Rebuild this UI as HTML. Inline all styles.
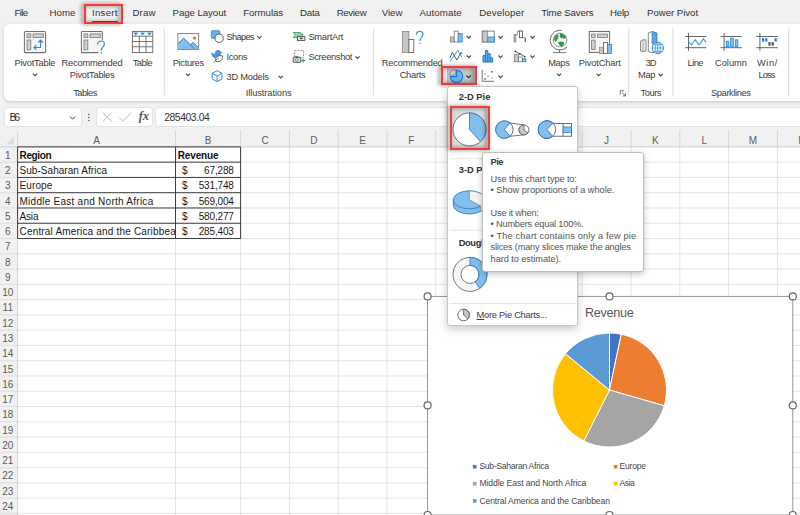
<!DOCTYPE html><html><head><meta charset="utf-8"><title>Excel - Insert Pie Chart</title><style>
html,body{margin:0;padding:0}
body{width:800px;height:515px;overflow:hidden;background:#f1f1f1;font-family:'Liberation Sans',sans-serif;color:#444}
#app{position:relative;width:800px;height:515px;overflow:hidden;background:#f1f1f1}
.t{position:absolute;white-space:nowrap;line-height:1;color:#3c3c3c}
.abs{position:absolute}
svg{position:absolute;left:0;top:0;overflow:visible}
.ribbon{position:absolute;left:4px;top:24px;width:820px;height:76.5px;background:#fff;border-radius:6px;box-shadow:0 1px 3px rgba(0,0,0,.18)}
.box{position:absolute;background:#fff;border-radius:3px;box-shadow:0 0 0 .7px #dedede}
.menu{position:absolute;left:447px;top:86px;width:131px;height:240px;background:#fff;border:.8px solid #c6c6c6;border-radius:3px;box-shadow:0 3px 8px rgba(0,0,0,.22);box-sizing:border-box}
.tip{position:absolute;left:482px;top:152px;width:162px;height:120px;background:#fff;border:.8px solid #bebebe;border-radius:3px;box-shadow:0 2px 6px rgba(0,0,0,.25);box-sizing:border-box}
.red{position:absolute;border:2px solid #f43a3a;box-sizing:border-box;filter:drop-shadow(-1.5px 0px 2px rgba(0,0,0,.6))}
</style></head><body><div id="app">
<div class="tabs">
<span class="t" style="left:14.50px;top:8px;font-size:9.7px;letter-spacing:-0.643px;color:#333;">File</span>
<span class="t" style="left:49.50px;top:8px;font-size:9.7px;letter-spacing:0.042px;color:#333;">Home</span>
<span class="t" style="left:92.00px;top:8px;font-size:9.7px;letter-spacing:0.248px;color:#333;">Insert</span>
<span class="t" style="left:132.50px;top:8px;font-size:9.7px;letter-spacing:0.122px;color:#333;">Draw</span>
<span class="t" style="left:172.50px;top:8px;font-size:9.7px;letter-spacing:-0.077px;color:#333;">Page Layout</span>
<span class="t" style="left:243.20px;top:8px;font-size:9.7px;letter-spacing:-0.060px;color:#333;">Formulas</span>
<span class="t" style="left:300.00px;top:8px;font-size:9.7px;letter-spacing:-0.163px;color:#333;">Data</span>
<span class="t" style="left:336.70px;top:8px;font-size:9.7px;letter-spacing:-0.361px;color:#333;">Review</span>
<span class="t" style="left:381.70px;top:8px;font-size:9.7px;letter-spacing:-0.016px;color:#333;">View</span>
<span class="t" style="left:419.50px;top:8px;font-size:9.7px;letter-spacing:0.098px;color:#333;">Automate</span>
<span class="t" style="left:479.20px;top:8px;font-size:9.7px;letter-spacing:0.099px;color:#333;">Developer</span>
<span class="t" style="left:541.20px;top:8px;font-size:9.7px;letter-spacing:-0.158px;color:#333;">Time Savers</span>
<span class="t" style="left:610.00px;top:8px;font-size:9.7px;letter-spacing:-0.250px;color:#333;">Help</span>
<span class="t" style="left:647.00px;top:8px;font-size:9.7px;letter-spacing:-0.055px;color:#333;">Power Pivot</span>
<div class="abs" style="left:91.8px;top:20.5px;width:26px;height:1.7px;background:#1e6e42;border-radius:1px"></div>
</div>
<div class="ribbon"></div>
<span class="t" style="left:14.50px;top:59px;font-size:9.3px;letter-spacing:-0.212px;">PivotTable</span>
<span class="t" style="left:61.60px;top:59px;font-size:9.3px;letter-spacing:-0.206px;">Recommended</span>
<span class="t" style="left:69.70px;top:71px;font-size:9.3px;letter-spacing:-0.256px;">PivotTables</span>
<span class="t" style="left:132.70px;top:59px;font-size:9.3px;letter-spacing:-0.558px;">Table</span>
<span class="t" style="left:73.30px;top:89px;font-size:9.3px;letter-spacing:-0.576px;">Tables</span>
<span class="t" style="left:172.65px;top:59px;font-size:9.3px;letter-spacing:-0.299px;">Pictures</span>
<span class="t" style="left:226.50px;top:33px;font-size:9.3px;letter-spacing:-0.708px;">Shapes</span>
<span class="t" style="left:226.50px;top:53px;font-size:9.3px;letter-spacing:-0.307px;">Icons</span>
<span class="t" style="left:226.50px;top:73px;font-size:9.3px;letter-spacing:-0.244px;">3D Models</span>
<span class="t" style="left:308.40px;top:33px;font-size:9.3px;letter-spacing:-0.241px;">SmartArt</span>
<span class="t" style="left:308.40px;top:53px;font-size:9.3px;letter-spacing:-0.338px;">Screenshot</span>
<span class="t" style="left:245.70px;top:89px;font-size:9.3px;letter-spacing:-0.086px;">Illustrations</span>
<span class="t" style="left:381.80px;top:59px;font-size:9.3px;letter-spacing:-0.206px;">Recommended</span>
<span class="t" style="left:399.70px;top:71px;font-size:9.3px;letter-spacing:-0.278px;">Charts</span>
<span class="t" style="left:548.15px;top:59px;font-size:9.3px;letter-spacing:-0.347px;">Maps</span>
<span class="t" style="left:578.80px;top:59px;font-size:9.3px;letter-spacing:-0.157px;">PivotChart</span>
<span class="t" style="left:645.50px;top:59px;font-size:9.3px;letter-spacing:-0.888px;">3D</span>
<span class="t" style="left:638.00px;top:71px;font-size:9.3px;letter-spacing:-0.295px;">Map</span>
<span class="t" style="left:640.50px;top:89px;font-size:9.3px;letter-spacing:-0.435px;">Tours</span>
<span class="t" style="left:687.50px;top:59px;font-size:9.3px;letter-spacing:-0.527px;">Line</span>
<span class="t" style="left:715.00px;top:59px;font-size:9.3px;letter-spacing:-0.009px;">Column</span>
<span class="t" style="left:756.95px;top:59px;font-size:9.3px;letter-spacing:0.633px;">Win/</span>
<span class="t" style="left:758.50px;top:71px;font-size:9.3px;letter-spacing:-0.881px;">Loss</span>
<span class="t" style="left:711.00px;top:89px;font-size:9.3px;letter-spacing:-0.380px;">Sparklines</span>
<svg width="800" height="105" viewBox="0 0 800 105"><line x1="164.3" y1="28.5" x2="164.3" y2="95.5" stroke="#e0e0e0" stroke-width="1.2"/><line x1="373.5" y1="28.5" x2="373.5" y2="95.5" stroke="#e0e0e0" stroke-width="1.2"/><line x1="628.8" y1="28.5" x2="628.8" y2="95.5" stroke="#e0e0e0" stroke-width="1.2"/><line x1="672.9" y1="28.5" x2="672.9" y2="95.5" stroke="#e0e0e0" stroke-width="1.2"/><line x1="788.6" y1="28.5" x2="788.6" y2="95.5" stroke="#e0e0e0" stroke-width="1.2"/><rect x="24.4" y="31.4" width="21.2" height="21.2" rx="1" fill="#f6f6f6" stroke="#707070" stroke-width="1.05"/><rect x="27" y="33.9" width="3.8" height="3.6" fill="#d2d0ce" stroke="#807e7c" stroke-width=".85"/><rect x="33.1" y="33.9" width="10.2" height="3.6" fill="#d2d0ce" stroke="#807e7c" stroke-width=".85"/><rect x="27" y="40" width="3.8" height="9.8" fill="#d2d0ce" stroke="#807e7c" stroke-width=".85"/><path d="M40.6 40.2 V47.5 H34 M38.2 42.6 L40.6 40.1 L43 42.6 M36.4 45.1 L33.9 47.5 L36.4 49.9" fill="none" stroke="#2b8ad6" stroke-width="1.1"/><path d="M32.90 73.60 L35.00 75.70 L37.10 73.60" fill="none" stroke="#484848" stroke-width="1.1"/><path d="M102.3 40 V32.2 a.8 .8 0 0 0 -.8 -.8 H82.2 a.8 .8 0 0 0 -.8 .8 V51.8 a.8 .8 0 0 0 .8 .8 H98.3" fill="#f6f6f6" stroke="#707070" stroke-width="1.05"/><rect x="84" y="33.9" width="3.8" height="3.6" fill="#d2d0ce" stroke="#807e7c" stroke-width=".85"/><rect x="90.1" y="33.9" width="10.2" height="3.6" fill="#d2d0ce" stroke="#807e7c" stroke-width=".85"/><rect x="84" y="40" width="3.8" height="9.8" fill="#d2d0ce" stroke="#807e7c" stroke-width=".85"/><path d="M97.6 44.3 C97.8 42 99.3 41 101 41 C103 41 104.4 42.3 104.4 44 C104.4 46.5 101.2 47.3 101.2 50.6" fill="none" stroke="#2b8ad6" stroke-width="1.2"/><circle cx="101.2" cy="53" r=".8" fill="#2b8ad6"/><rect x="132.4" y="31.4" width="20.4" height="21.2" fill="#fff" stroke="#666" stroke-width=".9"/><line x1="139.3" y1="36.2" x2="139.3" y2="52.6" stroke="#666" stroke-width=".9"/><line x1="146" y1="36.2" x2="146" y2="52.6" stroke="#666" stroke-width=".9"/><line x1="132.4" y1="36.2" x2="152.8" y2="36.2" stroke="#666" stroke-width=".9"/><line x1="132.4" y1="41.5" x2="152.8" y2="41.5" stroke="#666" stroke-width=".9"/><line x1="132.4" y1="46.8" x2="152.8" y2="46.8" stroke="#666" stroke-width=".9"/><path d="M133.3 32.6 H138.3 L135.8 35.4 Z" fill="#2b8ad6"/><path d="M140.1 32.6 H145.1 L142.6 35.4 Z" fill="#2b8ad6"/><path d="M146.9 32.6 H151.9 L149.4 35.4 Z" fill="#2b8ad6"/><rect x="177.9" y="33.6" width="20.8" height="15.8" fill="#fafafa" stroke="#7a7a7a" stroke-width=".9"/><path d="M178.3 43.6 L183.7 38.2 L190.6 45 L192.9 42.3 L198.3 47.2 V49 H178.3 Z" fill="#83beec"/><path d="M178.3 43.6 L183.7 38.2 L194.6 49 M190.6 45 L192.9 42.3 L198.3 47.2" fill="none" stroke="#2b7fd1" stroke-width="1"/><circle cx="194.5" cy="38.1" r="1.6" fill="#e8710a"/><path d="M185.90 73.60 L188.00 75.70 L190.10 73.60" fill="none" stroke="#484848" stroke-width="1.1"/><rect x="211.3" y="30.8" width="8.6" height="7.4" rx=".8" fill="#6aaeea" stroke="#2b7fd1" stroke-width=".8"/><circle cx="219.2" cy="38.3" r="4.1" fill="#fff" stroke="#555" stroke-width=".9"/><path d="M257.30 36.20 L259.40 38.30 L261.50 36.20" fill="none" stroke="#484848" stroke-width="1.1"/><path d="M211.2 52.6 C212.4 53.8 214.2 53.9 215.2 53 C215 51 216.6 49.9 218.4 50.1 C219.8 50.3 220.6 51.2 220.8 52 L222.6 52.5 L220.9 53.5 C220.9 56.4 218.8 58.4 215.9 58.4 C213 58.4 211.2 55.8 211.2 52.6 Z" fill="#4a97dc"/><path d="M213.9 62.6 C215 60.8 216.6 59.2 218.8 58 M215.6 60.6 C215 57 218 55.2 222.4 55.8 C222.8 60 220.6 62.2 216 61.4 Z" fill="#fff" stroke="#555" stroke-width=".85"/><path d="M217.1 70.7 L222 73.3 V79 L217.1 81.6 L212.2 79 V73.3 Z M212.2 73.3 L217.1 75.9 L222 73.3 M217.1 75.9 V81.6" fill="none" stroke="#2b8ad6" stroke-width=".95" stroke-linejoin="round"/><path d="M278.60 75.90 L280.70 78.00 L282.80 75.90" fill="none" stroke="#484848" stroke-width="1.1"/><path d="M293.2 32.6 H300.6 L303.2 35.1 L300.6 37.6 H293.2 L295.4 35.1 Z" fill="#8fd3aa" stroke="#2e9b5a" stroke-width=".8"/><rect x="297.5" y="36.4" width="7.3" height="4.1" fill="#e6e6e6" stroke="#555" stroke-width=".9"/><path d="M299.8 38.4 H302.6" stroke="#555" stroke-width="1.6"/><rect x="294.4" y="50.4" width="9.2" height="7" fill="none" stroke="#777" stroke-width=".8" stroke-dasharray="2 1.2"/><rect x="293.2" y="57.2" width="7.6" height="5.2" rx=".6" fill="#d8d8d8" stroke="#555" stroke-width=".9"/><rect x="295.2" y="56.3" width="3" height="1.2" fill="#555"/><circle cx="296.7" cy="59.8" r="1.3" fill="#fff" stroke="#555" stroke-width=".7"/><path d="M301.3 60.6 H305 M303.2 58.7 V62.5" stroke="#37a566" stroke-width="1.1"/><path d="M355.40 56.40 L357.50 58.50 L359.60 56.40" fill="none" stroke="#484848" stroke-width="1.1"/><rect x="402.3" y="31.5" width="6.6" height="21" fill="#c8c6c4" stroke="#8a8886" stroke-width=".8"/><rect x="408.9" y="39.5" width="4.9" height="13" fill="#fff" stroke="#666" stroke-width=".9"/><path d="M416.3 34.6 C416.5 32.3 418 31.4 419.7 31.4 C421.7 31.4 423 32.6 423 34.3 C423 36.8 419.9 37.6 419.9 40.9" fill="none" stroke="#3d96dd" stroke-width="1.2"/><circle cx="419.9" cy="43.3" r=".8" fill="#3d96dd"/><rect x="450.3" y="37" width="3.9" height="5" fill="#c8c6c4" stroke="#777" stroke-width=".7"/><rect x="454.2" y="31.1" width="4" height="10.9" fill="#fff" stroke="#666" stroke-width=".7"/><rect x="458.2" y="33.6" width="4" height="8.4" fill="#83beec" stroke="#2b7fd1" stroke-width=".8"/><path d="M466.70 36.00 L468.80 38.10 L470.90 36.00" fill="none" stroke="#484848" stroke-width="1.1"/><rect x="482.2" y="31.1" width="12" height="10.9" fill="#fff" stroke="#666" stroke-width=".8"/><rect x="482.2" y="31.1" width="5.6" height="10.9" fill="#c8c6c4" stroke="#777" stroke-width=".7"/><rect x="487.8" y="37" width="6.4" height="5" fill="#83beec" stroke="#2b7fd1" stroke-width=".8"/><path d="M498.40 36.00 L500.50 38.10 L502.60 36.00" fill="none" stroke="#484848" stroke-width="1.1"/><path d="M514.2 42 V34.6 H517.5 V31.1 H522.5 V37.8 H525 " fill="none" stroke="#777" stroke-width=".8"/><rect x="514.2" y="34.8" width="1.7" height="7.2" fill="#c8c6c4" stroke="#777" stroke-width=".6"/><rect x="519.6" y="31.1" width="2.9" height="6.6" fill="#fff" stroke="#555" stroke-width=".8"/><rect x="524.6" y="37.8" width="1.4" height="4.2" fill="#2b7fd1"/><path d="M530.40 36.00 L532.50 38.10 L534.60 36.00" fill="none" stroke="#484848" stroke-width="1.1"/><path d="M449.8 58 L452.3 52.3 L456.8 60 L461.2 52.3 L462.4 54" fill="none" stroke="#444" stroke-width=".9"/><path d="M450 61.3 L457.8 50.4 L462 57.2" fill="none" stroke="#2b8ad6" stroke-width=".95"/><path d="M466.70 55.50 L468.80 57.60 L470.90 55.50" fill="none" stroke="#484848" stroke-width="1.1"/><path d="M483 62 V55.6 H485.4 V50.6 H487.8 V53.8 H490.2 V57.8 H492.6 V62 Z M485.4 55.6 V62 M487.8 53.8 V62 M490.2 57.8 V62" fill="#6aaeea" stroke="#1f72c8" stroke-width="1"/><path d="M498.40 55.50 L500.50 57.60 L502.60 55.50" fill="none" stroke="#484848" stroke-width="1.1"/><rect x="514.2" y="54.4" width="4.3" height="7.4" fill="#c8c6c4" stroke="#777" stroke-width=".7"/><rect x="518.5" y="57" width="3.8" height="4.8" fill="#fff" stroke="#666" stroke-width=".7"/><rect x="522.3" y="58.8" width="3.6" height="3" fill="#83beec" stroke="#2b7fd1" stroke-width=".8"/><path d="M515.3 51.4 L519.8 53.8 L524.8 56.6" stroke="#444" stroke-width=".8" fill="none"/><circle cx="515.3" cy="51.4" r=".9" fill="#333"/><circle cx="519.8" cy="53.8" r=".9" fill="#333"/><circle cx="524.8" cy="56.6" r=".9" fill="#333"/><path d="M530.40 55.50 L532.50 57.60 L534.60 55.50" fill="none" stroke="#484848" stroke-width="1.1"/><rect x="442.5" y="67.2" width="33.5" height="16.6" fill="#c6c6c6"/><rect x="442.5" y="67.2" width="5" height="16.6" fill="#e6e6e6"/><line x1="447.6" y1="67.2" x2="447.6" y2="83.8" stroke="#a8a8a8" stroke-width=".7"/><path d="M456.6 76.6 V70.2 A6.3 6.3 0 1 1 450.2 76.6 Z" fill="#6fb1ea" stroke="#1f78d1" stroke-width="1.1" stroke-linejoin="round"/><path d="M455.2 75.2 V69.6 A5.6 5.6 0 0 0 449.6 75.2 Z" fill="#d0d0d0" stroke="#808080" stroke-width=".8" stroke-linejoin="round"/><path d="M466.50 75.50 L468.60 77.60 L470.70 75.50" fill="none" stroke="#333" stroke-width="1.1"/><path d="M482.2 69.8 V81.3 H494" fill="none" stroke="#666" stroke-width=".9"/><rect x="484.3" y="73.1" width="1.4" height="1.4" fill="#4a9be6"/><rect x="487.3" y="75.3" width="1.4" height="1.4" fill="#4a9be6"/><rect x="491.1" y="71.1" width="1.4" height="1.4" fill="#333"/><rect x="484.3" y="78.3" width="1.4" height="1.4" fill="#333"/><rect x="491.3" y="77.3" width="1.4" height="1.4" fill="#7cbcf0"/><path d="M498.40 75.50 L500.50 77.60 L502.60 75.50" fill="none" stroke="#484848" stroke-width="1.1"/><circle cx="560" cy="40" r="6.8" fill="#fff" stroke="#777" stroke-width=".8"/><path d="M554.4 37.2 C555.2 35.4 556.8 34.4 558.4 34.6 C559 36 557.8 37.2 558.2 38.6 C557 39.6 556.8 41.4 555.6 42.2 C554.2 40.8 553.8 38.8 554.4 37.2 Z M560 33.4 C562.4 33.2 564.8 34.4 566 36.4 C566.4 37.8 565 39.2 563.4 38.6 C561.8 38.2 560 38.4 560 36.8 C560 35.6 559.2 34.6 560 33.4 Z M557.6 42.2 C559.4 41.2 562 41.4 564 42.2 C564.4 44 563.2 46 561.4 46.7 C559.8 45.8 559.4 44.2 557.6 42.2 Z" fill="#2f9e4f"/><path d="M561.5 30.4 A9.8 9.8 0 1 0 566.8 47.2" fill="none" stroke="#666" stroke-width="1"/><path d="M559.5 49.6 V52.5 M553.2 52.6 H566" stroke="#666" stroke-width=".9" fill="none"/><path d="M556.90 73.60 L559.00 75.70 L561.10 73.60" fill="none" stroke="#484848" stroke-width="1.1"/><rect x="589.3" y="31.5" width="20.3" height="20.9" fill="#f6f6f6" stroke="#707070" stroke-width="1.05"/><rect x="591.6" y="34.1" width="3.5" height="3.4" fill="#d2d0ce" stroke="#807e7c" stroke-width=".85"/><rect x="597.6" y="34.1" width="9.8" height="3.4" fill="#d2d0ce" stroke="#807e7c" stroke-width=".85"/><rect x="591.6" y="40.1" width="3.5" height="9.3" fill="#d2d0ce" stroke="#807e7c" stroke-width=".85"/><rect x="599.6" y="47.2" width="4" height="6.3" fill="#c8c6c4" stroke="#8a8886" stroke-width=".7"/><rect x="603.6" y="42.6" width="4" height="10.9" fill="#fff" stroke="#555" stroke-width=".8"/><rect x="607.6" y="44.6" width="3.9" height="8.9" fill="#83beec" stroke="#2b7fd1" stroke-width=".8"/><path d="M596.50 73.60 L598.60 75.70 L600.70 73.60" fill="none" stroke="#484848" stroke-width="1.1"/><path d="M620.3 94.6 V90.7 H624.2 M622 92.4 L625.3 95.7 M625.5 93.2 V95.9 H622.8" fill="none" stroke="#555" stroke-width=".8"/><path d="M640.5 41 L643 39.8 H646 V51 L643 51.8 L640.5 51 Z" fill="#e4e4e4" stroke="#777" stroke-width=".8"/><path d="M643 39.8 V51.8" stroke="#999" stroke-width=".6"/><path d="M648.3 33 L652 31.6 L656.8 33 V52 L652 52.6 L648.3 51.6 Z" fill="#fff" stroke="#666" stroke-width=".8"/><path d="M652 31.6 L656.8 33 V46 L652 44 Z" fill="#5aa4e6" stroke="#2b7fd1" stroke-width=".6"/><circle cx="657.8" cy="48" r="5.6" fill="#fff" stroke="#2b8ad6" stroke-width="1"/><path d="M652.2 48 H663.4 M657.8 42.4 V53.6 M653.4 44.8 H662.2 M653.4 51.2 H662.2" stroke="#2b8ad6" stroke-width=".7" fill="none"/><ellipse cx="657.8" cy="48" rx="2.6" ry="5.6" fill="none" stroke="#2b8ad6" stroke-width=".7"/><path d="M658.60 73.90 L660.70 76.00 L662.80 73.90" fill="none" stroke="#484848" stroke-width="1.1"/><path d="M688.5 33 V50.8 M685 36.5 H706.3 M685 47.7 H706.3" stroke="#555" stroke-width=".9" fill="none"/><path d="M724.1 33 V50.8 M720.6 36.5 H741.9 M720.6 47.7 H741.9" stroke="#555" stroke-width=".9" fill="none"/><path d="M759.9 33 V50.8 M756.4 36.5 H777.6999999999999 M756.4 47.7 H777.6999999999999" stroke="#555" stroke-width=".9" fill="none"/><path d="M688.8 42.2 L691.5 44.8 L695.2 39.6 L699 44.8 L703.4 38.8 L706 42.4" fill="none" stroke="#3d96dd" stroke-width="1.1"/><rect x="726.2" y="41.2" width="2.7" height="5.4" fill="#7cbcf0" stroke="#2b8ad6" stroke-width=".8"/><rect x="730.6" y="38.2" width="2.7" height="8.4" fill="#7cbcf0" stroke="#2b8ad6" stroke-width=".8"/><rect x="735.2" y="39.8" width="2.7" height="6.8" fill="#7cbcf0" stroke="#2b8ad6" stroke-width=".8"/><rect x="762" y="38.1" width="2.2" height="3.5" fill="#2b7fd1"/><rect x="765.2" y="38.1" width="2.2" height="3.5" fill="#2b7fd1"/><rect x="768.4" y="42.1" width="2.2" height="3.5" fill="#555"/><rect x="771.6" y="42.1" width="2.2" height="3.5" fill="#555"/><rect x="774.6" y="38.1" width="2.2" height="3.5" fill="#2b7fd1"/></svg>
<div class="red" style="left:84px;top:4px;width:39px;height:20px"></div>
<div class="box" style="left:4.5px;top:107.8px;width:76.5px;height:18.4px"></div>
<div class="box" style="left:97.3px;top:107.8px;width:54.7px;height:18.4px"></div>
<div class="box" style="left:156.3px;top:107.8px;width:660px;height:18.4px"></div>
<span class="t" style="left:9.40px;top:112px;font-size:10.6px;letter-spacing:-2.165px;color:#333;">B6</span>
<span class="t" style="left:164.20px;top:113px;font-size:10.4px;letter-spacing:-0.445px;color:#333;">285403.04</span>
<svg width="800" height="130" viewBox="0 0 800 130"><path d="M70 116.6 L72.6 119.2 L75.2 116.6" fill="none" stroke="#444" stroke-width="1"/><circle cx="88.8" cy="114.4" r=".75" fill="#555"/><circle cx="88.8" cy="117.4" r=".75" fill="#555"/><circle cx="88.8" cy="120.4" r=".75" fill="#555"/><path d="M102.8 112.8 L111.6 121.6 M111.6 112.8 L102.8 121.6" stroke="#b4b4b4" stroke-width=".95" fill="none"/><path d="M119.2 117.6 L122.8 121.2 L131.2 112.8" stroke="#b4b4b4" stroke-width=".95" fill="none"/></svg>
<span class="t" style="left:138.8px;top:110px;font:italic 700 12.5px/1 'Liberation Serif',serif;color:#555;letter-spacing:-.2px">fx</span>
<svg width="800" height="515" viewBox="0 0 800 515"><rect x="17.6" y="146.9" width="790" height="380" fill="#fff"/><line x1="0" y1="162.17" x2="800" y2="162.17" stroke="#e2e2e2" stroke-width=".9"/><line x1="0" y1="177.44" x2="800" y2="177.44" stroke="#e2e2e2" stroke-width=".9"/><line x1="0" y1="192.71" x2="800" y2="192.71" stroke="#e2e2e2" stroke-width=".9"/><line x1="0" y1="207.98" x2="800" y2="207.98" stroke="#e2e2e2" stroke-width=".9"/><line x1="0" y1="223.25" x2="800" y2="223.25" stroke="#e2e2e2" stroke-width=".9"/><line x1="0" y1="238.52" x2="800" y2="238.52" stroke="#e2e2e2" stroke-width=".9"/><line x1="0" y1="253.79" x2="800" y2="253.79" stroke="#e2e2e2" stroke-width=".9"/><line x1="0" y1="269.06" x2="800" y2="269.06" stroke="#e2e2e2" stroke-width=".9"/><line x1="0" y1="284.33" x2="800" y2="284.33" stroke="#e2e2e2" stroke-width=".9"/><line x1="0" y1="299.60" x2="800" y2="299.60" stroke="#e2e2e2" stroke-width=".9"/><line x1="0" y1="314.87" x2="800" y2="314.87" stroke="#e2e2e2" stroke-width=".9"/><line x1="0" y1="330.14" x2="800" y2="330.14" stroke="#e2e2e2" stroke-width=".9"/><line x1="0" y1="345.41" x2="800" y2="345.41" stroke="#e2e2e2" stroke-width=".9"/><line x1="0" y1="360.68" x2="800" y2="360.68" stroke="#e2e2e2" stroke-width=".9"/><line x1="0" y1="375.95" x2="800" y2="375.95" stroke="#e2e2e2" stroke-width=".9"/><line x1="0" y1="391.22" x2="800" y2="391.22" stroke="#e2e2e2" stroke-width=".9"/><line x1="0" y1="406.49" x2="800" y2="406.49" stroke="#e2e2e2" stroke-width=".9"/><line x1="0" y1="421.76" x2="800" y2="421.76" stroke="#e2e2e2" stroke-width=".9"/><line x1="0" y1="437.03" x2="800" y2="437.03" stroke="#e2e2e2" stroke-width=".9"/><line x1="0" y1="452.30" x2="800" y2="452.30" stroke="#e2e2e2" stroke-width=".9"/><line x1="0" y1="467.57" x2="800" y2="467.57" stroke="#e2e2e2" stroke-width=".9"/><line x1="0" y1="482.84" x2="800" y2="482.84" stroke="#e2e2e2" stroke-width=".9"/><line x1="0" y1="498.11" x2="800" y2="498.11" stroke="#e2e2e2" stroke-width=".9"/><line x1="0" y1="513.38" x2="800" y2="513.38" stroke="#e2e2e2" stroke-width=".9"/><line x1="0" y1="528.65" x2="800" y2="528.65" stroke="#e2e2e2" stroke-width=".9"/><line x1="175.50" y1="128" x2="175.50" y2="515" stroke="#e2e2e2" stroke-width=".9"/><line x1="240.60" y1="128" x2="240.60" y2="515" stroke="#e2e2e2" stroke-width=".9"/><line x1="289.40" y1="128" x2="289.40" y2="515" stroke="#e2e2e2" stroke-width=".9"/><line x1="338.20" y1="128" x2="338.20" y2="515" stroke="#e2e2e2" stroke-width=".9"/><line x1="387.00" y1="128" x2="387.00" y2="515" stroke="#e2e2e2" stroke-width=".9"/><line x1="435.80" y1="128" x2="435.80" y2="515" stroke="#e2e2e2" stroke-width=".9"/><line x1="484.60" y1="128" x2="484.60" y2="515" stroke="#e2e2e2" stroke-width=".9"/><line x1="533.40" y1="128" x2="533.40" y2="515" stroke="#e2e2e2" stroke-width=".9"/><line x1="582.20" y1="128" x2="582.20" y2="515" stroke="#e2e2e2" stroke-width=".9"/><line x1="631.00" y1="128" x2="631.00" y2="515" stroke="#e2e2e2" stroke-width=".9"/><line x1="679.80" y1="128" x2="679.80" y2="515" stroke="#e2e2e2" stroke-width=".9"/><line x1="728.60" y1="128" x2="728.60" y2="515" stroke="#e2e2e2" stroke-width=".9"/><line x1="777.40" y1="128" x2="777.40" y2="515" stroke="#e2e2e2" stroke-width=".9"/><line x1="826.20" y1="128" x2="826.20" y2="515" stroke="#e2e2e2" stroke-width=".9"/><rect x="0" y="128" width="800" height="18.90" fill="#f1f1f1"/><rect x="0" y="128" width="17.6" height="400" fill="#f1f1f1"/><line x1="0" y1="162.17" x2="17.6" y2="162.17" stroke="#dcdcdc" stroke-width=".9"/><line x1="0" y1="177.44" x2="17.6" y2="177.44" stroke="#dcdcdc" stroke-width=".9"/><line x1="0" y1="192.71" x2="17.6" y2="192.71" stroke="#dcdcdc" stroke-width=".9"/><line x1="0" y1="207.98" x2="17.6" y2="207.98" stroke="#dcdcdc" stroke-width=".9"/><line x1="0" y1="223.25" x2="17.6" y2="223.25" stroke="#dcdcdc" stroke-width=".9"/><line x1="0" y1="238.52" x2="17.6" y2="238.52" stroke="#dcdcdc" stroke-width=".9"/><line x1="0" y1="253.79" x2="17.6" y2="253.79" stroke="#dcdcdc" stroke-width=".9"/><line x1="0" y1="269.06" x2="17.6" y2="269.06" stroke="#dcdcdc" stroke-width=".9"/><line x1="0" y1="284.33" x2="17.6" y2="284.33" stroke="#dcdcdc" stroke-width=".9"/><line x1="0" y1="299.60" x2="17.6" y2="299.60" stroke="#dcdcdc" stroke-width=".9"/><line x1="0" y1="314.87" x2="17.6" y2="314.87" stroke="#dcdcdc" stroke-width=".9"/><line x1="0" y1="330.14" x2="17.6" y2="330.14" stroke="#dcdcdc" stroke-width=".9"/><line x1="0" y1="345.41" x2="17.6" y2="345.41" stroke="#dcdcdc" stroke-width=".9"/><line x1="0" y1="360.68" x2="17.6" y2="360.68" stroke="#dcdcdc" stroke-width=".9"/><line x1="0" y1="375.95" x2="17.6" y2="375.95" stroke="#dcdcdc" stroke-width=".9"/><line x1="0" y1="391.22" x2="17.6" y2="391.22" stroke="#dcdcdc" stroke-width=".9"/><line x1="0" y1="406.49" x2="17.6" y2="406.49" stroke="#dcdcdc" stroke-width=".9"/><line x1="0" y1="421.76" x2="17.6" y2="421.76" stroke="#dcdcdc" stroke-width=".9"/><line x1="0" y1="437.03" x2="17.6" y2="437.03" stroke="#dcdcdc" stroke-width=".9"/><line x1="0" y1="452.30" x2="17.6" y2="452.30" stroke="#dcdcdc" stroke-width=".9"/><line x1="0" y1="467.57" x2="17.6" y2="467.57" stroke="#dcdcdc" stroke-width=".9"/><line x1="0" y1="482.84" x2="17.6" y2="482.84" stroke="#dcdcdc" stroke-width=".9"/><line x1="0" y1="498.11" x2="17.6" y2="498.11" stroke="#dcdcdc" stroke-width=".9"/><line x1="0" y1="513.38" x2="17.6" y2="513.38" stroke="#dcdcdc" stroke-width=".9"/><line x1="0" y1="528.65" x2="17.6" y2="528.65" stroke="#dcdcdc" stroke-width=".9"/><line x1="175.50" y1="130" x2="175.50" y2="146.9" stroke="#d4d4d4" stroke-width=".9"/><line x1="240.60" y1="130" x2="240.60" y2="146.9" stroke="#d4d4d4" stroke-width=".9"/><line x1="289.40" y1="130" x2="289.40" y2="146.9" stroke="#d4d4d4" stroke-width=".9"/><line x1="338.20" y1="130" x2="338.20" y2="146.9" stroke="#d4d4d4" stroke-width=".9"/><line x1="387.00" y1="130" x2="387.00" y2="146.9" stroke="#d4d4d4" stroke-width=".9"/><line x1="435.80" y1="130" x2="435.80" y2="146.9" stroke="#d4d4d4" stroke-width=".9"/><line x1="484.60" y1="130" x2="484.60" y2="146.9" stroke="#d4d4d4" stroke-width=".9"/><line x1="533.40" y1="130" x2="533.40" y2="146.9" stroke="#d4d4d4" stroke-width=".9"/><line x1="582.20" y1="130" x2="582.20" y2="146.9" stroke="#d4d4d4" stroke-width=".9"/><line x1="631.00" y1="130" x2="631.00" y2="146.9" stroke="#d4d4d4" stroke-width=".9"/><line x1="679.80" y1="130" x2="679.80" y2="146.9" stroke="#d4d4d4" stroke-width=".9"/><line x1="728.60" y1="130" x2="728.60" y2="146.9" stroke="#d4d4d4" stroke-width=".9"/><line x1="777.40" y1="130" x2="777.40" y2="146.9" stroke="#d4d4d4" stroke-width=".9"/><line x1="826.20" y1="130" x2="826.20" y2="146.9" stroke="#d4d4d4" stroke-width=".9"/><line x1="0" y1="146.9" x2="800" y2="146.9" stroke="#c9c9c9" stroke-width=".9"/><line x1="17.6" y1="132" x2="17.6" y2="515" stroke="#cfcfcf" stroke-width=".9"/><path d="M14.2 136 V144.2 H6 Z" fill="#dcdcdc"/><line x1="17.6" y1="146.90" x2="240.6" y2="146.90" stroke="#2b2b2b" stroke-width=".9"/><line x1="17.6" y1="162.17" x2="240.6" y2="162.17" stroke="#2b2b2b" stroke-width=".9"/><line x1="17.6" y1="177.44" x2="240.6" y2="177.44" stroke="#2b2b2b" stroke-width=".9"/><line x1="17.6" y1="192.71" x2="240.6" y2="192.71" stroke="#2b2b2b" stroke-width=".9"/><line x1="17.6" y1="207.98" x2="240.6" y2="207.98" stroke="#2b2b2b" stroke-width=".9"/><line x1="17.6" y1="223.25" x2="240.6" y2="223.25" stroke="#2b2b2b" stroke-width=".9"/><line x1="17.6" y1="238.52" x2="240.6" y2="238.52" stroke="#2b2b2b" stroke-width=".9"/><line x1="17.6" y1="146.9" x2="17.6" y2="238.52" stroke="#2b2b2b" stroke-width=".9"/><line x1="175.5" y1="146.9" x2="175.5" y2="238.52" stroke="#2b2b2b" stroke-width=".9"/><line x1="240.6" y1="146.9" x2="240.6" y2="238.52" stroke="#2b2b2b" stroke-width=".9"/></svg>
<span class="t" style="left:93.21px;top:136px;font-size:10px;color:#606060;">A</span>
<span class="t" style="left:204.71px;top:136px;font-size:10px;color:#606060;">B</span>
<span class="t" style="left:261.39px;top:136px;font-size:10px;color:#606060;">C</span>
<span class="t" style="left:310.19px;top:136px;font-size:10px;color:#606060;">D</span>
<span class="t" style="left:359.26px;top:136px;font-size:10px;color:#606060;">E</span>
<span class="t" style="left:408.35px;top:136px;font-size:10px;color:#606060;">F</span>
<span class="t" style="left:456.31px;top:136px;font-size:10px;color:#606060;">G</span>
<span class="t" style="left:505.39px;top:136px;font-size:10px;color:#606060;">H</span>
<span class="t" style="left:556.41px;top:136px;font-size:10px;color:#606060;">I</span>
<span class="t" style="left:604.10px;top:136px;font-size:10px;color:#606060;">J</span>
<span class="t" style="left:652.06px;top:136px;font-size:10px;color:#606060;">K</span>
<span class="t" style="left:701.42px;top:136px;font-size:10px;color:#606060;">L</span>
<span class="t" style="left:748.84px;top:136px;font-size:10px;color:#606060;">M</span>
<span class="t" style="left:798.19px;top:136px;font-size:10px;color:#606060;">N</span>
<span class="t" style="left:5.02px;top:151px;font-size:10px;color:#5c5c5c;">1</span>
<span class="t" style="left:5.02px;top:166px;font-size:10px;color:#5c5c5c;">2</span>
<span class="t" style="left:5.02px;top:181px;font-size:10px;color:#5c5c5c;">3</span>
<span class="t" style="left:5.02px;top:197px;font-size:10px;color:#5c5c5c;">4</span>
<span class="t" style="left:5.02px;top:212px;font-size:10px;color:#5c5c5c;">5</span>
<span class="t" style="left:5.02px;top:227px;font-size:10px;color:#5c5c5c;">6</span>
<span class="t" style="left:5.02px;top:242px;font-size:10px;color:#5c5c5c;">7</span>
<span class="t" style="left:5.02px;top:258px;font-size:10px;color:#5c5c5c;">8</span>
<span class="t" style="left:5.02px;top:273px;font-size:10px;color:#5c5c5c;">9</span>
<span class="t" style="left:2.24px;top:288px;font-size:10px;color:#5c5c5c;">10</span>
<span class="t" style="left:2.61px;top:303px;font-size:10px;color:#5c5c5c;">11</span>
<span class="t" style="left:2.24px;top:319px;font-size:10px;color:#5c5c5c;">12</span>
<span class="t" style="left:2.24px;top:334px;font-size:10px;color:#5c5c5c;">13</span>
<span class="t" style="left:2.24px;top:349px;font-size:10px;color:#5c5c5c;">14</span>
<span class="t" style="left:2.24px;top:365px;font-size:10px;color:#5c5c5c;">15</span>
<span class="t" style="left:2.24px;top:380px;font-size:10px;color:#5c5c5c;">16</span>
<span class="t" style="left:2.24px;top:395px;font-size:10px;color:#5c5c5c;">17</span>
<span class="t" style="left:2.24px;top:410px;font-size:10px;color:#5c5c5c;">18</span>
<span class="t" style="left:2.24px;top:426px;font-size:10px;color:#5c5c5c;">19</span>
<span class="t" style="left:2.24px;top:441px;font-size:10px;color:#5c5c5c;">20</span>
<span class="t" style="left:2.24px;top:456px;font-size:10px;color:#5c5c5c;">21</span>
<span class="t" style="left:2.24px;top:471px;font-size:10px;color:#5c5c5c;">22</span>
<span class="t" style="left:2.24px;top:487px;font-size:10px;color:#5c5c5c;">23</span>
<span class="t" style="left:2.24px;top:502px;font-size:10px;color:#5c5c5c;">24</span>
<div class="abs" style="left:18px;top:146px;width:157px;height:95px;overflow:hidden">
<span class="t" style="left:1.60px;top:5px;font-size:10px;letter-spacing:-0.377px;font-weight:700;color:#111;">Region</span>
<span class="t" style="left:1.50px;top:20px;font-size:10px;letter-spacing:0.046px;color:#1a1a1a;">Sub-Saharan Africa</span>
<span class="t" style="left:1.50px;top:35px;font-size:10px;letter-spacing:0.111px;color:#1a1a1a;">Europe</span>
<span class="t" style="left:1.50px;top:51px;font-size:10px;letter-spacing:0.258px;color:#1a1a1a;">Middle East and North Africa</span>
<span class="t" style="left:1.50px;top:66px;font-size:10px;letter-spacing:-0.151px;color:#1a1a1a;">Asia</span>
<span class="t" style="left:1.50px;top:81px;font-size:10px;letter-spacing:0.182px;color:#1a1a1a;">Central America and the Caribbean</span>
</div>
<span class="t" style="left:177.80px;top:151px;font-size:10px;letter-spacing:-0.164px;font-weight:700;color:#111;">Revenue</span>
<span class="t" style="left:182.00px;top:166px;font-size:10px;color:#1a1a1a;">$</span>
<span class="t" style="left:204.07px;top:166px;font-size:10px;letter-spacing:-0.150px;color:#1a1a1a;">67,288</span>
<span class="t" style="left:182.00px;top:181px;font-size:10px;color:#1a1a1a;">$</span>
<span class="t" style="left:198.66px;top:181px;font-size:10px;letter-spacing:-0.150px;color:#1a1a1a;">531,748</span>
<span class="t" style="left:182.00px;top:197px;font-size:10px;color:#1a1a1a;">$</span>
<span class="t" style="left:198.66px;top:197px;font-size:10px;letter-spacing:-0.150px;color:#1a1a1a;">569,004</span>
<span class="t" style="left:182.00px;top:212px;font-size:10px;color:#1a1a1a;">$</span>
<span class="t" style="left:198.66px;top:212px;font-size:10px;letter-spacing:-0.150px;color:#1a1a1a;">580,277</span>
<span class="t" style="left:182.00px;top:227px;font-size:10px;color:#1a1a1a;">$</span>
<span class="t" style="left:198.66px;top:227px;font-size:10px;letter-spacing:-0.150px;color:#1a1a1a;">285,403</span>
<svg width="800" height="515" viewBox="0 0 800 515"><rect x="427.6" y="296.4" width="365.19999999999993" height="218.60000000000002" fill="#fff" stroke="#8c8c8c" stroke-width=".9"/><path d="M609.5 390 L609.50 333.00 A57 57 0 0 1 621.26 334.23 Z" fill="#4472c4" stroke="#fff" stroke-width="1" stroke-linejoin="round"/><path d="M609.5 390 L621.26 334.23 A57 57 0 0 1 664.28 405.75 Z" fill="#ed7d31" stroke="#fff" stroke-width="1" stroke-linejoin="round"/><path d="M609.5 390 L664.28 405.75 A57 57 0 0 1 583.83 440.89 Z" fill="#a5a5a5" stroke="#fff" stroke-width="1" stroke-linejoin="round"/><path d="M609.5 390 L583.83 440.89 A57 57 0 0 1 565.50 353.76 Z" fill="#ffc000" stroke="#fff" stroke-width="1" stroke-linejoin="round"/><path d="M609.5 390 L565.50 353.76 A57 57 0 0 1 609.50 333.00 Z" fill="#5b9bd5" stroke="#fff" stroke-width="1" stroke-linejoin="round"/><rect x="472.9" y="464.9" width="3.6" height="3.6" fill="#4472c4"/><rect x="613.8" y="464.9" width="3.6" height="3.6" fill="#ed7d31"/><rect x="472.9" y="482.0" width="3.6" height="3.6" fill="#a5a5a5"/><rect x="613.8" y="482.0" width="3.6" height="3.6" fill="#ffc000"/><rect x="472.9" y="499.09999999999997" width="3.6" height="3.6" fill="#5b9bd5"/><circle cx="427.6" cy="296.4" r="3.5" fill="#fff" stroke="#666" stroke-width="1.2"/><circle cx="609.5" cy="296.4" r="3.5" fill="#fff" stroke="#666" stroke-width="1.2"/><circle cx="792.8" cy="296.4" r="3.5" fill="#fff" stroke="#666" stroke-width="1.2"/><circle cx="427.6" cy="405.4" r="3.5" fill="#fff" stroke="#666" stroke-width="1.2"/><circle cx="792.8" cy="405.4" r="3.5" fill="#fff" stroke="#666" stroke-width="1.2"/><circle cx="427.6" cy="515.0" r="3.5" fill="#fff" stroke="#666" stroke-width="1.2"/><circle cx="609.5" cy="515.0" r="3.5" fill="#fff" stroke="#666" stroke-width="1.2"/><circle cx="792.8" cy="515.0" r="3.5" fill="#fff" stroke="#666" stroke-width="1.2"/></svg>
<span class="t" style="left:585.00px;top:307px;font-size:12.6px;letter-spacing:-0.272px;color:#595959;">Revenue</span>
<span class="t" style="left:479.40px;top:462px;font-size:8.6px;letter-spacing:-0.281px;color:#484848;">Sub-Saharan Africa</span>
<span class="t" style="left:619.50px;top:462px;font-size:8.6px;letter-spacing:-0.246px;color:#484848;">Europe</span>
<span class="t" style="left:479.40px;top:479px;font-size:8.6px;letter-spacing:-0.073px;color:#484848;">Middle East and North Africa</span>
<span class="t" style="left:619.50px;top:479px;font-size:8.6px;letter-spacing:-0.510px;color:#484848;">Asia</span>
<span class="t" style="left:479.40px;top:497px;font-size:8.6px;letter-spacing:-0.116px;color:#484848;">Central America and the Caribbean</span>
<div class="red" style="left:441px;top:66px;width:36px;height:19px"></div>
<div class="menu"></div>
<svg width="800" height="515" viewBox="0 0 800 515"><line x1="449.5" y1="158.7" x2="576" y2="158.7" stroke="#e1e1e1" stroke-width=".9"/><line x1="449.5" y1="230.2" x2="576" y2="230.2" stroke="#e1e1e1" stroke-width=".9"/><line x1="449.5" y1="303.6" x2="576" y2="303.6" stroke="#e1e1e1" stroke-width=".9"/><rect x="451" y="107" width="37.5" height="42" fill="#dadada"/><circle cx="469.5" cy="129.4" r="16.5" fill="#fff" stroke="#666" stroke-width=".9"/><path d="M469.5 129.4 V112.9 A16.5 16.5 0 0 1 480.54 141.66 Z" fill="#83beec" stroke="#2b7fd1" stroke-width=".9" stroke-linejoin="round"/><circle cx="504.4" cy="129.6" r="8.7" fill="#fafafa" stroke="#555" stroke-width=".85"/><path d="M504.4 129.6 L509.99 136.26 A8.7 8.7 0 1 1 509.99 122.94 Z" fill="#83beec" stroke="#2b7fd1" stroke-width=".9" stroke-linejoin="round"/><path d="M509.99 122.94 L523.6 124.9 M509.99 136.26 L523.6 134.9" stroke="#555" stroke-width=".8" fill="none"/><circle cx="524" cy="129.9" r="5" fill="#fafafa" stroke="#555" stroke-width=".85"/><path d="M524 129.9 V124.9 A5 5 0 1 0 528 132.9 Z" fill="#c8c6c4" stroke="#555" stroke-width=".8"/><circle cx="547" cy="129.6" r="8.7" fill="#fafafa" stroke="#555" stroke-width=".85"/><path d="M547 129.6 L552.59 136.26 A8.7 8.7 0 1 1 552.59 122.94 Z" fill="#83beec" stroke="#2b7fd1" stroke-width=".9" stroke-linejoin="round"/><rect x="552.59" y="123.5" width="18.91" height="12.7" fill="#fff" stroke="#555" stroke-width=".85"/><line x1="563.1" y1="123.5" x2="563.1" y2="136.2" stroke="#555" stroke-width=".85"/><rect x="563.1" y="127" width="8.4" height="5.6" fill="#83beec" stroke="#2b7fd1" stroke-width=".8"/><circle cx="547" cy="129.6" r="8.7" fill="#fafafa" stroke="#555" stroke-width=".85"/><path d="M547 129.6 L552.59 136.26 A8.7 8.7 0 1 1 552.59 122.94 Z" fill="#83beec" stroke="#2b7fd1" stroke-width=".9" stroke-linejoin="round"/><g transform="translate(0,.8)"><path d="M453.3 199 V204.2 A16 9 0 0 0 485.3 204.2 V199" fill="#83beec" stroke="#2b7fd1" stroke-width=".9"/><ellipse cx="469.3" cy="199" rx="16" ry="9" fill="#83beec" stroke="#2b7fd1" stroke-width=".9"/><path d="M469.3 199 V190 A16 9 0 0 1 485.3 199 A16 9 0 0 1 480.8 205.3 Z" fill="#f4f4f4" stroke="#888" stroke-width=".8"/><path d="M485.3 199 V204.2 A16 9 0 0 1 480.8 210.5 V205.3" fill="#fff" stroke="#888" stroke-width=".8"/></g><circle cx="470" cy="274.4" r="13" fill="none" stroke="#f6f6f6" stroke-width="8"/><circle cx="470" cy="274.4" r="17" fill="none" stroke="#666" stroke-width=".9"/><circle cx="470" cy="274.4" r="9" fill="#fff" stroke="#666" stroke-width=".9"/><path d="M470 257.4 A17 17 0 0 1 479.75 288.33 L475.16 281.77 A9 9 0 0 0 470 265.4 Z" fill="#83beec" stroke="#2b7fd1" stroke-width=".9" stroke-linejoin="round"/><circle cx="463.6" cy="315" r="5.8" fill="#fff" stroke="#555" stroke-width=".9"/><path d="M463.6 315 V309.2 A5.8 5.8 0 0 1 467.8 319 Z" fill="#c8c6c4" stroke="#555" stroke-width=".8"/></svg>
<div class="red" style="left:450px;top:106px;width:39.5px;height:44px"></div>
<span class="t" style="left:458.80px;top:93px;font-size:9.3px;font-weight:700;color:#333;">2-D Pie</span>
<span class="t" style="left:458.80px;top:166px;font-size:9.3px;font-weight:700;color:#333;">3-D Pie</span>
<span class="t" style="left:458.80px;top:239px;font-size:9.3px;letter-spacing:-0.414px;font-weight:700;color:#333;">Doughnut</span>
<span class="t" style="left:476.6px;top:311px;font-size:9.3px;letter-spacing:-.25px"><u>M</u>ore Pie Charts...</span>
<div class="tip"></div>
<span class="t" style="left:490.50px;top:158px;font-size:9.3px;letter-spacing:-0.479px;font-weight:700;">Pie</span>
<span class="t" style="left:490.60px;top:175px;font-size:9.2px;letter-spacing:-0.117px;color:#555;">Use this chart type to:</span>
<span class="t" style="left:490.60px;top:186px;font-size:9.2px;letter-spacing:-0.018px;color:#555;">• Show proportions of a whole.</span>
<span class="t" style="left:490.60px;top:209px;font-size:9.2px;letter-spacing:-0.211px;color:#555;">Use it when:</span>
<span class="t" style="left:490.60px;top:220px;font-size:9.2px;letter-spacing:-0.180px;color:#555;">• Numbers equal 100%.</span>
<span class="t" style="left:490.60px;top:232px;font-size:9.2px;letter-spacing:0.165px;color:#555;">• The chart contains only a few pie</span>
<span class="t" style="left:490.60px;top:243px;font-size:9.2px;letter-spacing:-0.186px;color:#555;">slices (many slices make the angles</span>
<span class="t" style="left:490.60px;top:255px;font-size:9.2px;letter-spacing:-0.058px;color:#555;">hard to estimate).</span>
</div></body></html>
